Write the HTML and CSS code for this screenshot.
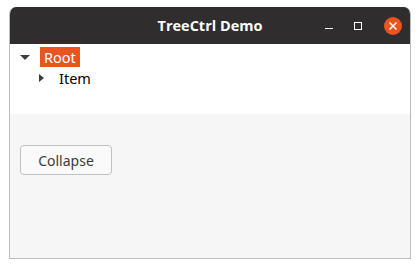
FILE: index.html
```html
<!DOCTYPE html>
<html lang="en">
<head>
<meta charset="UTF-8">
<title>TreeCtrl Demo</title>
<link rel="stylesheet" href="styles.css">
</head>
<body>
  <div class="window">
    <header class="titlebar">
      <span class="title">TreeCtrl Demo</span>
      <div class="controls">
        <span class="ctl minimize"></span>
        <span class="ctl maximize"></span>
        <span class="ctl close">
          <svg width="10" height="10" viewBox="0 0 10 10">
            <line x1="1.5" y1="1.5" x2="8.5" y2="8.5" stroke="#fff" stroke-width="1.5"/>
            <line x1="8.5" y1="1.5" x2="1.5" y2="8.5" stroke="#fff" stroke-width="1.5"/>
          </svg>
        </span>
      </div>
    </header>

    <section class="tree">
      <div class="node">
        <span class="arrow down"></span>
        <span class="label selected">Root</span>
      </div>
      <div class="node child">
        <span class="arrow right"></span>
        <span class="label">Item</span>
      </div>
    </section>

    <section class="panel">
      <button class="btn">Collapse</button>
    </section>
  </div>
</body>
</html>
```

FILE: styles.css
```css
body {
  margin: 0;
  background: #ffffff;
  font-family: "Noto Sans", "Open Sans", sans-serif;
}

.window {
  margin: 7px 0 0 9px;
  width: 402px;
  height: 252px;
  box-sizing: border-box;
  border: 1px solid #bdbdbd;
  border-top: none;
  border-radius: 7px 7px 0 0;
  display: flex;
  flex-direction: column;
  overflow: hidden;
}

.titlebar {
  position: relative;
  height: 37px;
  background: #2f2d2d;
  display: flex;
  align-items: center;
  justify-content: center;
  flex-shrink: 0;
}

.title {
  color: #ffffff;
  font-family: "Open Sans", "Noto Sans", sans-serif;
  font-weight: bold;
  font-size: 14.5px;
}

.controls {
  position: absolute;
  right: 8px;
  top: 0;
  height: 37px;
  display: flex;
  align-items: center;
  gap: 16px;
}

.ctl {
  display: block;
}

.minimize {
  width: 8px;
  height: 1px;
  margin-top: 5px;
  background: #ffffff;
}

.maximize {
  width: 6px;
  height: 6px;
  border: 1.5px solid #ffffff;
  margin-left: 5px;
}

.close {
  width: 18px;
  height: 18px;
  border-radius: 50%;
  background: #e95420;
  display: flex;
  align-items: center;
  justify-content: center;
  margin-left: 6px;
}

.tree {
  background: #ffffff;
  height: 70px;
  padding-top: 3px;
  box-sizing: border-box;
  flex-shrink: 0;
}

.node {
  display: flex;
  align-items: center;
  height: 20px;
  font-size: 14.5px;
  color: #000000;
}

.node.child {
  margin-top: 1px;
}

.arrow {
  width: 0;
  height: 0;
  display: block;
}

.arrow.down {
  margin-left: 10px;
  border-left: 5px solid transparent;
  border-right: 5px solid transparent;
  border-top: 5px solid #3c3c3c;
}

.arrow.right {
  margin-left: 29px;
  border-top: 4.5px solid transparent;
  border-bottom: 4.5px solid transparent;
  border-left: 5px solid #3c3c3c;
}

.label {
  padding: 0 3px;
  line-height: 20px;
}

.node .label {
  margin-left: 10px;
}

.node.child .label {
  margin-left: 12px;
}

.label.selected {
  background: #e95420;
  color: #ffffff;
  padding: 0 4px;
}

.panel {
  flex: 1;
  background: #f6f6f6;
  padding: 31px 0 0 10px;
}

.btn {
  width: 92px;
  height: 30px;
  font-family: inherit;
  font-size: 14px;
  color: #3c3c3c;
  background: #fafafa;
  border: 1px solid #c4c0bc;
  border-radius: 4px;
  padding: 0;
}
```
